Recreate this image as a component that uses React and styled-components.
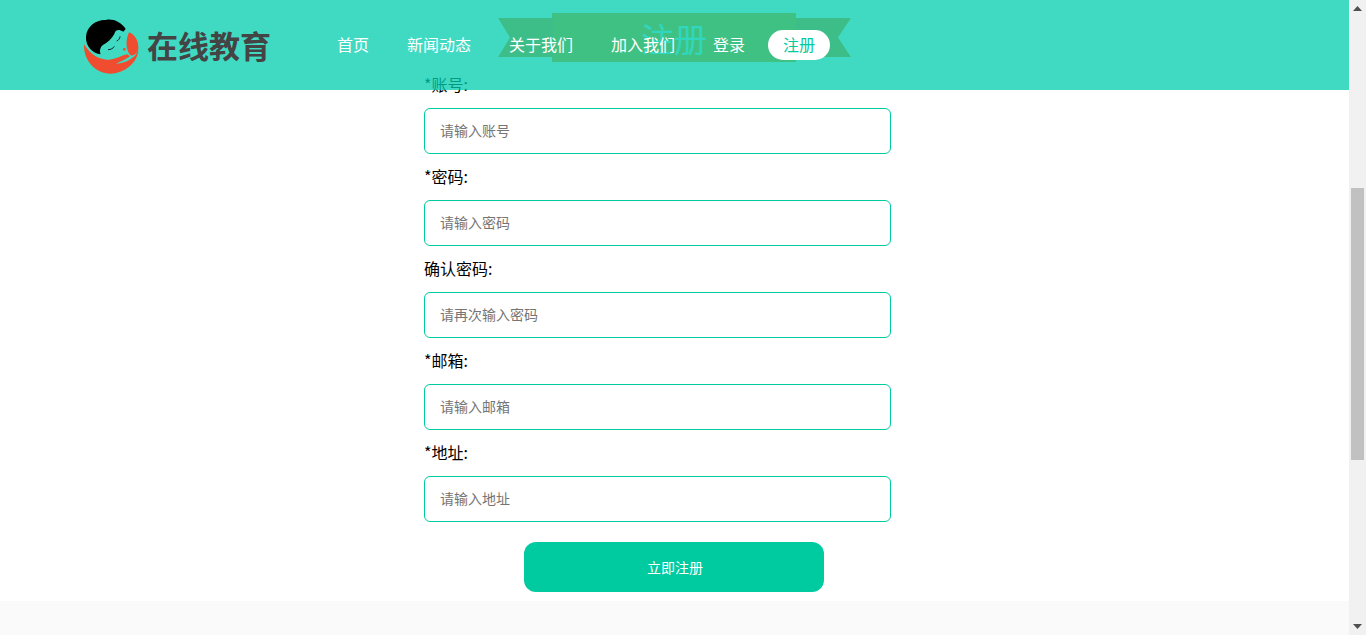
import React from "react";
import styled, { createGlobalStyle } from "styled-components";

const Global = createGlobalStyle`
  html, body { margin: 0; padding: 0; height: 635px; overflow: hidden; background: #fff; }
  body { font-family: "Noto Sans CJK SC", "Noto Sans", sans-serif; }
  input::placeholder { color: #757575; opacity: 1; }
`;

const Frame = styled.div`
  display: flex;
  width: 1366px;
  height: 635px;
  overflow: hidden;
`;
const Viewport = styled.div`
  position: relative;
  flex: 1;
  display: flex;
  flex-direction: column;
  min-width: 0;
`;
const Main = styled.main`
  flex: 1;
  background: #fff;
  display: flex;
  flex-direction: column;
`;
const TitleArea = styled.div`
  height: 62px;
  padding-top: 13px;
  box-sizing: border-box;
  display: flex;
  justify-content: center;
`;
const Ribbon = styled.div`
  position: relative;
  width: 244px;
  height: 49px;
  margin-left: -1px;
  background: #ff9c05;
  &::before, &::after {
    content: "";
    position: absolute;
    top: 5px;
    width: 55px;
    height: 39px;
    background: #f28f14;
    z-index: 0;
  }
  &::before { left: -54px; clip-path: polygon(0 0, 100% 0, 100% 100%, 0 100%, 12px 50%); }
  &::after { right: -55px; clip-path: polygon(0 0, 100% 0, 42px 50%, 100% 100%, 0 100%); }
`;
const Title = styled.h1`
  margin: 0;
  font-size: 33px;
  font-weight: 400;
  line-height: 49px;
  text-align: center;
  color: #c0eee8;
  padding-top: 1px;
`;
const Form = styled.form`
  display: flex;
  flex-direction: column;
  padding-left: 424px;
`;
const Field = styled.div`
  display: flex;
  flex-direction: column;
  width: 467px;
`;
const Label = styled.label`
  height: 46px;
  line-height: 44px;
  font-size: 16px;
  color: #000;
`;
const Input = styled.input`
  box-sizing: border-box;
  width: 467px;
  height: 46px;
  padding: 0 15px 2px;
  border: 1px solid #00cba0;
  border-radius: 6px;
  background: #fff;
  font: 14px "Noto Sans CJK SC", sans-serif;
  outline: none;
`;
const Submit = styled.button`
  width: 300px;
  height: 50px;
  margin: 20px 0 0 100px;
  padding: 0 0 0 2px;
  border: none;
  border-radius: 12px;
  background: #00cba0;
  color: #fff;
  font: 14px "Noto Sans CJK SC", sans-serif;
`;
const Footer = styled.footer`
  height: 34px;
  background: #fafafa;
  margin-top: auto;
`;
const Header = styled.header`
  position: absolute;
  top: 0;
  left: 0;
  right: 0;
  height: 90px;
  display: flex;
  align-items: center;
  padding-left: 84px;
  background: rgba(0, 206, 175, 0.75);
`;
const Logo = styled.div`
  display: flex;
  align-items: center;
  gap: 10px;
  width: 253px;
`;
const LogoText = styled.span`
  font-size: 31px;
  font-weight: 700;
  color: #444;
  line-height: 1;
  white-space: nowrap;
  padding-bottom: 2px;
`;
const Nav = styled.nav`
  display: flex;
  align-items: center;
`;
const NavItem = styled.a`
  font-size: 16px;
  font-weight: 400;
  color: #fff;
  white-space: nowrap;
  padding-bottom: 2px;
  margin-right: ${(p) => p.$gap}px;
`;
const NavPill = styled.a`
  width: 62px;
  height: 30px;
  line-height: 28px;
  text-align: center;
  border-radius: 15px;
  background: #fff;
  color: #00cba0;
  font-size: 16px;
  font-weight: 400;
`;
const Scrollbar = styled.div`
  position: relative;
  width: 17px;
  background: #f1f1f1;
  display: flex;
  flex-direction: column;
  justify-content: space-between;
  align-items: center;
`;
const Arrow = styled.svg`
  display: block;
  width: 17px;
  height: 17px;
`;
const Thumb = styled.div`
  position: absolute;
  top: 188px;
  left: 2px;
  width: 13px;
  height: 272px;
  background: #c1c1c1;
`;
const Mark = styled.svg`
  display: block;
  width: 64px;
  height: 60px;
  margin: 0 -7px 0 -4px;
`;

const fields = [
  ["*账号:", "请输入账号"],
  ["*密码:", "请输入密码"],
  ["确认密码:", "请再次输入密码"],
  ["*邮箱:", "请输入邮箱"],
  ["*地址:", "请输入地址"],
];
const links = [["首页", 38], ["新闻动态", 38], ["关于我们", 38], ["加入我们", 38], ["登录", 23]];

const LogoMark = () => (
  <Mark viewBox="0 0 192 180">
    <path fill="#f04c2f" d="M12 88C30 116 52 132 80 134C102 136 122 122 142 118L150 124C135 134 122 140 108 146C130 146 150 135 165 122L175 105C173 145 130 176 92 176C45 176 10 135 12 88Z" />
    <path fill="#f04c2f" d="M147 52C165 58 177 80 175 102C172 115 160 125 150 120C142 108 138 95 140 78C141 68 144 60 147 52Z" />
    <path fill="#000" d="M18 65C20 33 50 13 78 15C95 10 124 20 137 42L130 50C118 42 108 44 105 52C100 65 88 80 72 88C60 95 58 108 62 118C40 115 16 95 18 65Z" />
    <path fill="none" stroke="#123" strokeWidth="3" d="M110 78C116 76 120 70 120 64M84 104C92 104 100 100 103 94" />
    <circle cx="133" cy="103" r="4" fill="#f04c2f" />
  </Mark>
);

export default function App() {
  return (
    <Frame>
      <Global />
      <Viewport>
        <Main>
          <TitleArea>
            <Ribbon>
              <Title>注册</Title>
            </Ribbon>
          </TitleArea>
          <Form>
            {fields.map(([l, p]) => (
              <Field key={l}>
                <Label>{l}</Label>
                <Input placeholder={p} />
              </Field>
            ))}
            <Submit type="button">立即注册</Submit>
          </Form>
          <Footer />
        </Main>
        <Header>
          <Logo>
            <LogoMark />
            <LogoText>在线教育</LogoText>
          </Logo>
          <Nav>
            {links.map(([t, g]) => (
              <NavItem key={t} $gap={g}>{t}</NavItem>
            ))}
            <NavPill>注册</NavPill>
          </Nav>
        </Header>
      </Viewport>
      <Scrollbar>
        <Arrow viewBox="0 0 17 17"><path fill="#505050" d="M8.5 6L13 11H4Z" /></Arrow>
        <Thumb />
        <Arrow viewBox="0 0 17 17"><path fill="#505050" d="M4 6H13L8.5 11Z" /></Arrow>
      </Scrollbar>
    </Frame>
  );
}
